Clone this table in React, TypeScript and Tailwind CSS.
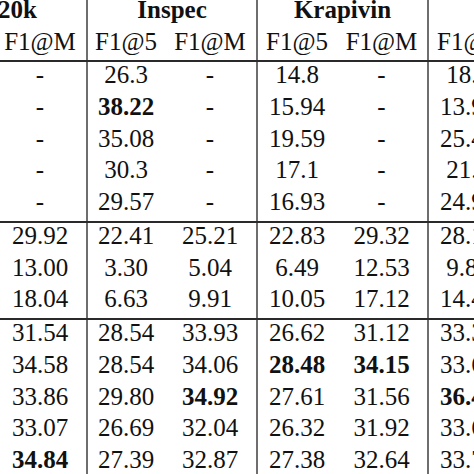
const widths = [80, 92, 78, 92, 80, 91, 80, 90];

type Cell = string | { v: string; b: true };

const groups = ['KP20k', 'Inspec', 'Krapivin', 'NUS'];
const metrics = ['F1@5', 'F1@M', 'F1@5', 'F1@M', 'F1@5', 'F1@M', 'F1@5', 'F1@M'];

const B = (v: string): Cell => ({ v, b: true });

// one array per table section, cols: KP20k F1@5/F1@M, Inspec, Krapivin, NUS
const sections: Cell[][][] = [
  [
    ['26.5', '-', '26.3', '-', '14.8', '-', '18.9', '-'],
    ['27.48', '-', B('38.22'), '-', '15.94', '-', '13.94', '-'],
    ['27.03', '-', '35.08', '-', '19.59', '-', '25.43', '-'],
    ['27.8', '-', '30.3', '-', '17.1', '-', '21.0', '-'],
    ['26.98', '-', '29.57', '-', '16.93', '-', '24.98', '-'],
  ],
  [
    ['25.86', '29.92', '22.41', '25.21', '22.83', '29.32', '28.12', '32.86'],
    ['11.76', '13.00', '3.30', '5.04', '6.49', '12.53', '9.84', '13.06'],
    ['16.37', '18.04', '6.63', '9.91', '10.05', '17.12', '14.43', '20.35'],
  ],
  [
    ['29.74', '31.54', '28.54', '33.93', '26.62', '31.12', '33.31', '37.02'],
    ['31.45', '34.58', '28.54', '34.06', B('28.48'), B('34.15'), '33.64', '38.26'],
    ['30.77', '33.86', '29.80', B('34.92'), '27.61', '31.56', B('36.47'), '38.90'],
    ['30.47', '33.07', '26.69', '32.04', '26.32', '31.92', '33.65', '37.43'],
    ['31.27', B('34.84'), '27.39', '32.87', '27.38', '32.64', '33.72', '37.45'],
  ],
];

function cellClass(i: number) {
  return i === 2 || i === 4 || i === 6 ? 'border-l-2 border-[#6e6e6e]' : '';
}

function Row({ cells }: { cells: Cell[] }) {
  return (
    <div className="flex h-[31.75px] leading-[25px]">
      {cells.map((c, i) => {
        const text = typeof c === 'string' ? c : c.v;
        const bold = typeof c !== 'string';
        return (
          <div
            key={i}
            style={{ width: widths[i] }}
            className={`shrink-0 text-center ${cellClass(i)} ${bold ? 'font-bold' : ''}`}
          >
            {text}
          </div>
        );
      })}
    </div>
  );
}

export default function App() {
  return (
    <div
      className="w-[474px] h-[474px] overflow-hidden bg-white text-[#111] text-[25px]"
      style={{ fontFamily: "'Liberation Serif', 'Times New Roman', serif" }}
    >
      <div className="ml-[-86px] mt-[-3px] w-[683px]">
        {/* Dataset header */}
        <div className="flex h-[31.5px] leading-[25px] font-bold">
          {groups.map((g, gi) => (
            <div
              key={g}
              style={{ width: widths[gi * 2] + widths[gi * 2 + 1] }}
              className={`shrink-0 text-center ${gi > 0 ? 'border-l-2 border-[#6e6e6e]' : ''}`}
            >
              {g}
            </div>
          ))}
        </div>
        {/* Metric header */}
        <div className="flex h-[31.5px] leading-[25px]">
          {metrics.map((m, i) => (
            <div key={i} style={{ width: widths[i] }} className={`shrink-0 text-center ${cellClass(i)}`}>
              {m}
            </div>
          ))}
        </div>

        {sections.map((rows, si) => (
          <div key={si} className="border-t-2 border-[#2a2a2a]">
            {rows.map((r, ri) => (
              <Row key={ri} cells={r} />
            ))}
          </div>
        ))}
      </div>
    </div>
  );
}
